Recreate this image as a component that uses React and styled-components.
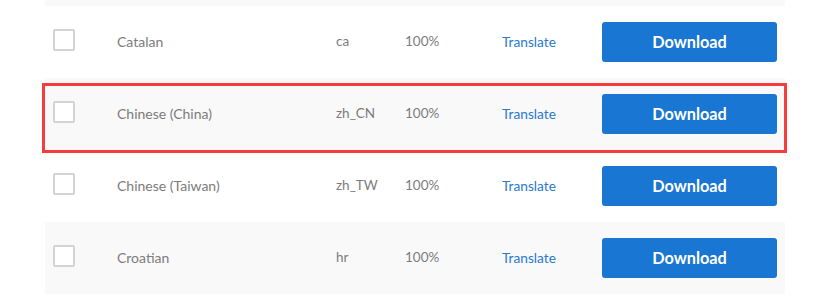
import React from "react";
import styled, { createGlobalStyle } from "styled-components";

const Global = createGlobalStyle`
  html, body { margin: 0; padding: 0; background: #fff; }
  body { font-family: Lato, "Open Sans", sans-serif; overflow: hidden; }
`;

const Table = styled.div`
  margin-left: 45px;
  width: 740px;
  display: flex;
  flex-direction: column;
`;

const RowTail = styled.div`
  height: 6px;
  background: #f9f9f9;
`;

const Row = styled.div`
  position: relative;
  display: grid;
  grid-template-columns: 64px 219px 69px 97px 100px 175px;
  align-items: center;
  height: 72px;
  padding: 0 8px;
  background: ${(p) => (p.$alt ? "#f9f9f9" : "#fff")};
`;

const Highlight = styled.div`
  position: absolute;
  z-index: 2;
  top: 5px;
  left: -3px;
  right: -2px;
  bottom: -3px;
  border: 3px solid #f63c3c;
  pointer-events: none;
`;

const Box = styled.span`
  width: 22px;
  height: 22px;
  box-sizing: border-box;
  border: 2px solid #d3d3d3;
  border-radius: 2px;
  background: #fff;
  margin-top: -4px;
`;

const Cell = styled.span`
  font-size: ${(p) => (p.$wide ? "14px" : "13.5px")};
  color: #7c7c7c;
  white-space: nowrap;
  margin-top: -2px;
`;

const Link = styled.a`
  font-size: 13.7px;
  color: #2a78cf;
  text-decoration: none;
  cursor: pointer;
  margin-top: -2px;
`;

const Button = styled.button`
  height: 40px;
  border: none;
  border-radius: 3px;
  background: #1a76d3;
  color: #fff;
  font-family: Lato, "Open Sans", sans-serif;
  font-weight: 700;
  font-size: 16.3px;
  padding: 0 0 2px;
  cursor: pointer;
`;

const rows = [
  { name: "Catalan", code: "ca" },
  { name: "Chinese (China)", code: "zh_CN", highlight: true },
  { name: "Chinese (Taiwan)", code: "zh_TW" },
  { name: "Croatian", code: "hr" },
];

export default function App() {
  return (
    <>
      <Global />
      <Table>
        <RowTail />
        {rows.map((r, i) => (
          <Row key={r.code} $alt={i % 2 === 1}>
            <Box />
            <Cell $wide>{r.name}</Cell>
            <Cell>{r.code}</Cell>
            <Cell>100%</Cell>
            <Link>Translate</Link>
            <Button>Download</Button>
            {r.highlight && <Highlight />}
          </Row>
        ))}
      </Table>
    </>
  );
}
